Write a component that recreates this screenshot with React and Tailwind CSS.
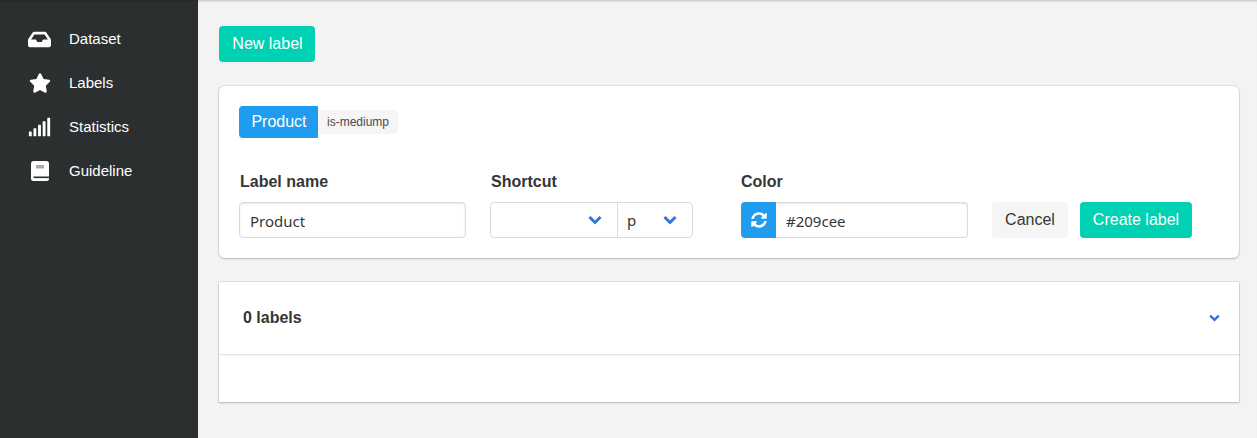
import { FaInbox, FaSignal, FaStar, FaSyncAlt } from "react-icons/fa";

const GuideIcon = () => (
  <svg viewBox="0 0 18 20" className="w-[18px]">
    <rect width="18" height="20" rx="2.5" fill="#fff" />
    <rect x="5" y="4" width="8" height="3.5" fill="#aaa" />
    <rect x="2.5" y="15.5" width="15.5" height="1.6" fill="#2b2f30" />
  </svg>
);

const navItems = [
  { label: "Dataset", icon: <FaInbox size={23} /> },
  { label: "Labels", icon: <FaStar size={22} /> },
  { label: "Statistics", icon: <FaSignal size={24} /> },
  { label: "Guideline", icon: <GuideIcon /> },
];

const Chevron = ({ className }) => (
  <svg viewBox="0 0 14 10" className={className} fill="none" stroke="currentColor" strokeWidth="3">
    <path d="M1.5 2 L7 7.5 L12.5 2" />
  </svg>
);

const App = () => {
  return (
    <div className="flex h-[438px] w-[1257px] overflow-hidden bg-[#f3f3f3] font-['Liberation_Sans',Arial,sans-serif] text-[#363636]">
      <aside className="w-[198px] shrink-0 bg-[#2b2f30] pt-[17px] pl-[28px] text-white shadow-[inset_0_2px_2px_-1px_rgba(0,0,0,0.2)]">
        {navItems.map((item) => (
          <div key={item.label} className="flex h-[44px] items-center">
            <span className="flex w-[23px] justify-center">{item.icon}</span>
            <span className="ml-[18px] text-[15px]">{item.label}</span>
          </div>
        ))}
      </aside>

      <main className="flex-1 pt-[26px] pr-[18px] pl-[21px] shadow-[inset_0_3px_3px_-2px_rgba(0,0,0,0.22)]">
        <button
          type="button"
          className="h-[36px] w-[96px] rounded-[4px] bg-[#00d1b2] pl-px text-[16px] text-white"
        >
          New label
        </button>

        <section className="mt-[24px] h-[172px] rounded-[6px] bg-white pt-[20px] pl-[20px] shadow-[0_1px_2px_rgba(10,10,10,0.2),0_0_0_1px_rgba(10,10,10,0.08)]">
          <div className="flex items-center">
            <span className="flex h-[32px] w-[79px] items-center justify-center rounded-l-[4px] bg-[#209cee] pl-px text-[16px] text-white">
              Product
            </span>
            <span className="flex h-[24px] w-[80px] items-center justify-center rounded-r-[4px] bg-[#f5f5f5] text-[12px] text-[#4a4a4a]">
              is-mediump
            </span>
          </div>

          <div className="mt-[32px] flex items-end">
            <div className="w-[227px]">
              <label className="mb-[8px] block pl-px text-[16px] leading-[24px] font-bold">Label name</label>
              <input
                readOnly
                value="Product"
                className="block h-[36px] w-full rounded-[4px] border border-[#dbdbdb] px-[10px] pt-[2px] font-['Noto_Sans',sans-serif] text-[15px] text-[#363636] shadow-[inset_0_1px_2px_rgba(10,10,10,0.1)] outline-none"
              />
            </div>

            <div className="ml-[24px] w-[203px]">
              <label className="mb-[8px] block pl-px text-[16px] leading-[24px] font-bold">Shortcut</label>
              <div className="flex h-[36px] rounded-[4px] border border-[#dbdbdb]">
                <div className="flex w-[127px] items-center justify-end border-r border-[#dbdbdb] pr-[15px] text-[#3273dc]">
                  <Chevron className="w-[14px]" />
                </div>
                <div className="flex flex-1 items-center justify-between pr-[15px] pl-[9px] font-['Noto_Sans',sans-serif] text-[15px]">
                  <span>p</span>
                  <span className="text-[#3273dc]">
                    <Chevron className="w-[14px]" />
                  </span>
                </div>
              </div>
            </div>

            <div className="ml-[48px] w-[227px]">
              <label className="mb-[8px] block text-[16px] leading-[24px] font-bold">Color</label>
              <div className="flex h-[36px]">
                <button
                  type="button"
                  className="flex w-[35px] items-center justify-center rounded-l-[4px] bg-[#209cee] text-white"
                >
                  <FaSyncAlt size={16} />
                </button>
                <input
                  readOnly
                  value="#209cee"
                  className="block h-full min-w-0 flex-1 rounded-r-[4px] border border-l-0 border-[#dbdbdb] px-[10px] pt-[2px] font-['Noto_Sans',sans-serif] text-[15px] text-[#363636] shadow-[inset_0_1px_2px_rgba(10,10,10,0.1)] outline-none"
                />
              </div>
            </div>

            <button
              type="button"
              className="ml-[24px] h-[36px] w-[76px] rounded-[4px] bg-[#f5f5f5] text-[16px] text-[#363636]"
            >
              Cancel
            </button>
            <button
              type="button"
              className="ml-[12px] h-[36px] w-[112px] rounded-[4px] bg-[#00d1b2] text-[16px] text-white"
            >
              Create label
            </button>
          </div>
        </section>

        <section className="mt-[24px] h-[120px] bg-white shadow-[0_1px_2px_rgba(10,10,10,0.2),0_0_0_1px_rgba(10,10,10,0.08)]">
          <header className="flex h-[73px] items-center justify-between border-b border-[#e5e5e5] pr-[19px] pl-[24px] shadow-[0_1px_1px_rgba(10,10,10,0.04)]">
            <span className="text-[16px] font-bold">0 labels</span>
            <span className="text-[#3273dc]">
              <Chevron className="w-[11px]" />
            </span>
          </header>
        </section>
      </main>
    </div>
  );
};

export default App;
